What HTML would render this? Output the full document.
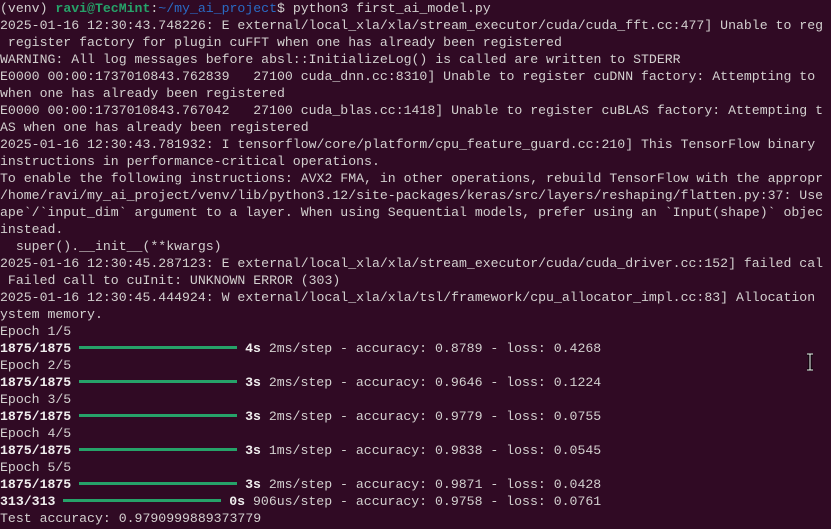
<!DOCTYPE html>
<html><head><meta charset="utf-8"><style>
html,body{margin:0;padding:0;background:#300a24;width:831px;height:529px;overflow:hidden}
pre{margin:0;padding:0 0 0 0;position:absolute;left:0;top:0;font-family:"Liberation Mono","DejaVu Sans Mono",monospace;font-size:13.2px;line-height:17px;color:#d3d0cf;white-space:pre;width:831px;overflow:hidden}
.g{color:#26a269;font-weight:bold}.b{color:#2a6bc4}
b{font-weight:bold;color:#f0eeee}
.bar{display:inline-block;height:3px;background:#26a269;vertical-align:middle;margin-top:-3px}
.cur{position:absolute;left:806px;top:353px;width:8px;height:18px}
</style></head><body>
<pre>(venv) <span class="g">ravi@TecMint</span>:<span class="b">~/my_ai_project</span>$ python3 first_ai_model.py
2025-01-16 12:30:43.748226: E external/local_xla/xla/stream_executor/cuda/cuda_fft.cc:477] Unable to reg
 register factory for plugin cuFFT when one has already been registered
WARNING: All log messages before absl::InitializeLog() is called are written to STDERR
E0000 00:00:1737010843.762839   27100 cuda_dnn.cc:8310] Unable to register cuDNN factory: Attempting to
when one has already been registered
E0000 00:00:1737010843.767042   27100 cuda_blas.cc:1418] Unable to register cuBLAS factory: Attempting t
AS when one has already been registered
2025-01-16 12:30:43.781932: I tensorflow/core/platform/cpu_feature_guard.cc:210] This TensorFlow binary
instructions in performance-critical operations.
To enable the following instructions: AVX2 FMA, in other operations, rebuild TensorFlow with the appropr
/home/ravi/my_ai_project/venv/lib/python3.12/site-packages/keras/src/layers/reshaping/flatten.py:37: Use
ape`/`input_dim` argument to a layer. When using Sequential models, prefer using an `Input(shape)` objec
instead.
  super().__init__(**kwargs)
2025-01-16 12:30:45.287123: E external/local_xla/xla/stream_executor/cuda/cuda_driver.cc:152] failed cal
 Failed call to cuInit: UNKNOWN ERROR (303)
2025-01-16 12:30:45.444924: W external/local_xla/xla/tsl/framework/cpu_allocator_impl.cc:83] Allocation
ystem memory.
Epoch 1/5
<b>1875/1875</b> <span class="bar" style="width:158px"></span> <b>4s</b> 2ms/step - accuracy: 0.8789 - loss: 0.4268
Epoch 2/5
<b>1875/1875</b> <span class="bar" style="width:158px"></span> <b>3s</b> 2ms/step - accuracy: 0.9646 - loss: 0.1224
Epoch 3/5
<b>1875/1875</b> <span class="bar" style="width:158px"></span> <b>3s</b> 2ms/step - accuracy: 0.9779 - loss: 0.0755
Epoch 4/5
<b>1875/1875</b> <span class="bar" style="width:158px"></span> <b>3s</b> 1ms/step - accuracy: 0.9838 - loss: 0.0545
Epoch 5/5
<b>1875/1875</b> <span class="bar" style="width:158px"></span> <b>3s</b> 2ms/step - accuracy: 0.9871 - loss: 0.0428
<b>313/313</b> <span class="bar" style="width:158px"></span> <b>0s</b> 906us/step - accuracy: 0.9758 - loss: 0.0761
Test accuracy: 0.9790999889373779</pre>
<svg class="cur" viewBox="0 0 8 18"><path d="M1 1h6M4 1v16M1 17h6" stroke="#000" stroke-width="3" fill="none"/><path d="M1 1h6M4 1v16M1 17h6" stroke="#fff" stroke-width="1" fill="none"/></svg>
</body></html>
